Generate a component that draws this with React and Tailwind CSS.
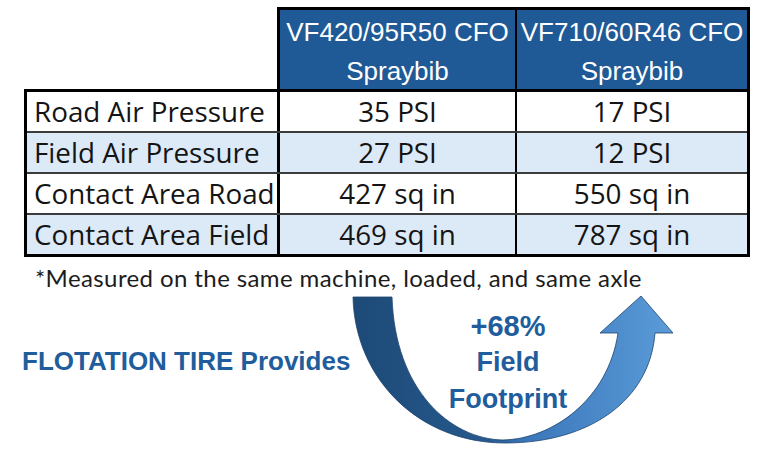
import React from "react";

const rows = [
  ["Road Air Pressure", "35 PSI", "17 PSI", false],
  ["Field Air Pressure", "27 PSI", "12 PSI", true],
  ["Contact Area Road", "427 sq in", "550 sq in", false],
  ["Contact Area Field", "469 sq in", "787 sq in", true],
];

function Arrow() {
  return (
    <svg
      className="absolute inset-0 pointer-events-none"
      width="768"
      height="454"
      viewBox="0 0 768 454"
    >
      <defs>
        <linearGradient id="arrowGrad" x1="353" y1="0" x2="673" y2="0" gradientUnits="userSpaceOnUse">
          <stop offset="0" stopColor="#1d4a77" />
          <stop offset="0.42" stopColor="#26598e" />
          <stop offset="0.55" stopColor="#3b78bb" />
          <stop offset="1" stopColor="#5b9bd8" />
        </linearGradient>
      </defs>
      <path
        d="M353,297 L392,297 C395,390 450,439 503,440 C552,439 608,400 618,333 L600,333 L641,296 L673,333 L655,333 C650,400 590,443 505,443 C420,443 355,380 353,297 Z"
        fill="url(#arrowGrad)"
        stroke="#1e4470"
        strokeWidth="0.8"
      />
    </svg>
  );
}

export default function App() {
  return (
    <div className="relative w-[768px] h-[454px] bg-white overflow-hidden">
      <div className="pt-[7px] pl-[24px]">
        {/* Header */}
        <div
          className="ml-[253px] w-[473px] h-[82px] flex border-[3px] border-b-0 border-black bg-[#1f5a96] text-white text-[26px] leading-[39px]"
          style={{ fontFamily: '"Liberation Sans", Arial, sans-serif' }}
        >
          <div className="w-[237px] pt-[4px] border-r-2 border-black flex flex-col items-center justify-center">
            <span>VF420/95R50 CFO</span>
            <span>Spraybib</span>
          </div>
          <div className="flex-1 pt-[4px] flex flex-col items-center justify-center">
            <span>VF710/60R46 CFO</span>
            <span>Spraybib</span>
          </div>
        </div>
        {/* Body */}
        <div
          className="w-[726px] border-[3px] border-black text-[#141414] text-[27.8px]"
          style={{ fontFamily: '"Open Sans", "Noto Sans", sans-serif' }}
        >
          {rows.map(([label, a, b, shaded], i) => (
            <div
              key={label}
              className={
                "flex h-[39px] leading-[39px] " +
                (i > 0 ? "border-t-2 border-[#3c3c3c] h-[41px] " : "") +
                (shaded ? "bg-[#dce9f6]" : "bg-white")
              }
            >
              <div className="w-[253px] border-r-[3px] border-black pl-[7px] whitespace-nowrap">
                {label}
              </div>
              <div className="w-[237px] border-r-2 border-black text-center whitespace-nowrap">
                {a}
              </div>
              <div className="flex-1 text-center whitespace-nowrap">{b}</div>
            </div>
          ))}
        </div>
      </div>

      {/* Footnote */}
      <div
        className="pl-[35px] mt-[7px] text-[24px] tracking-[0.4px] leading-[28px] text-[#1c1c1c] whitespace-nowrap"
        style={{ fontFamily: 'Lato, "Open Sans", sans-serif' }}
      >
        *Measured on the same machine, loaded, and same axle
      </div>

      {/* Bottom section */}
      <div
        className="flex text-[#1f5d9c] font-bold"
        style={{ fontFamily: '"Liberation Sans", Arial, sans-serif' }}
      >
        <div className="w-[438px] pl-[22px] pt-[56px] text-[26px] leading-[26px] whitespace-nowrap">
          FLOTATION TIRE Provides
        </div>
        <div className="w-[140px] pt-[16px] flex flex-col items-center text-[27px] leading-[36px]">
          <span className="text-[29px]">+68%</span>
          <span>Field</span>
          <span className="mt-[1px]">Footprint</span>
        </div>
      </div>

      <Arrow />
    </div>
  );
}
